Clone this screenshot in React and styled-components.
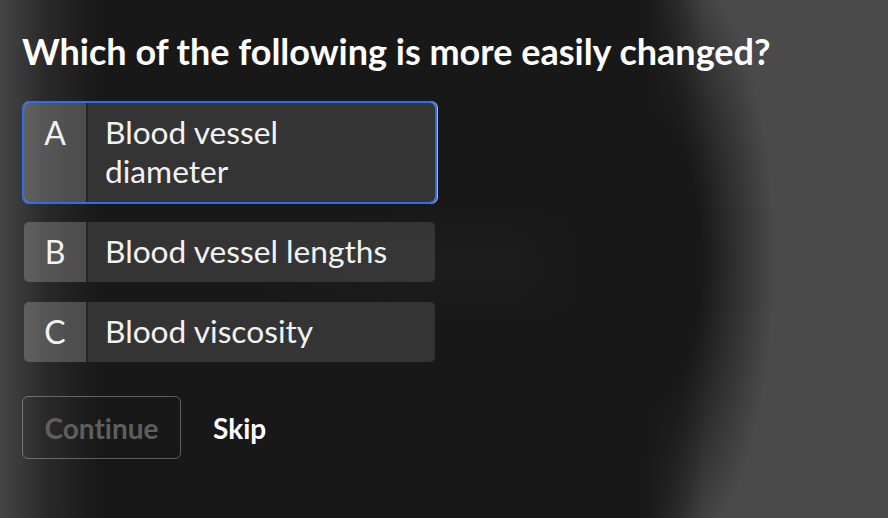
import React, { useState } from 'react'
import styled, { createGlobalStyle } from 'styled-components'

const GlobalStyle = createGlobalStyle`
  html, body {
    margin: 0;
    padding: 0;
    background: #181818;
  }
  body {
    font-family: Lato, "Noto Sans", sans-serif;
    font-variant-ligatures: none;
    -webkit-font-smoothing: antialiased;
  }
`

const OPTIONS = [
  { letter: 'A', text: 'Blood vessel diameter' },
  { letter: 'B', text: 'Blood vessel lengths' },
  { letter: 'C', text: 'Blood viscosity' },
]

const App = () => {
  const [selected, setSelected] = useState(0);

  return (
    <Page>
      <GlobalStyle />
      <Title>Which of the following is more easily changed?</Title>

      <OptionList>
        {OPTIONS.map((opt, idx) => (
          <Option
            key={opt.letter}
            $active={selected === idx}
            onClick={() => setSelected(idx)}
          >
            <Letter>{opt.letter}</Letter>
            <OptionText>{opt.text}</OptionText>
          </Option>
        ))}
      </OptionList>

      <Actions>
        <ContinueButton disabled>Continue</ContinueButton>
        <SkipButton>Skip</SkipButton>
      </Actions>
    </Page>
  )
}

const Page = styled.div`
  min-height: 100vh;
  box-sizing: border-box;
  padding: 31px 24px 0;
  background:
    radial-gradient(ellipse 135px 330px at 640px 260px, #181818 45%, rgba(24, 24, 24, 0) 100%),
    radial-gradient(ellipse 260px 60px at 470px 265px, rgba(255, 255, 255, 0.025) 0, rgba(255, 255, 255, 0) 100%),
    linear-gradient(to right, #454545 0, #2a2a2a 45px, #181818 100px, #181818 645px, #4a4a4a 705px);
`

const Title = styled.h1`
  margin: 0 0 0 -2px;
  font-size: 36px;
  line-height: 40px;
  font-weight: 700;
  color: #ffffff;
`

const OptionList = styled.div`
  display: flex;
  flex-direction: column;
  gap: 20px;
  width: 411px;
  margin-top: 32px;
`

const Option = styled.div`
  display: flex;
  align-items: stretch;
  border-radius: 5px;
  background: rgba(255, 255, 255, 0.12);
  color: #f2f2f2;
  cursor: pointer;
  box-shadow: ${p => p.$active
    ? '0 0 0 2px #2f6cf0, 1px 0 0 2px rgba(255, 255, 255, 0.7)'
    : 'none'};
`

const Letter = styled.div`
  flex: 0 0 62px;
  display: flex;
  justify-content: center;
  padding-top: 10px;
  font-size: 32px;
  line-height: 39px;
  background: rgba(255, 255, 255, 0.1);
  border-radius: 5px 0 0 5px;
  border-right: 2px solid #262626;
`

const OptionText = styled.div`
  flex: 1;
  padding: 10px 35px 11px 17px;
  font-size: 31.7px;
  line-height: 39px;
`

const Actions = styled.div`
  display: flex;
  align-items: center;
  gap: 32px;
  margin-top: 34px;
  margin-left: -2px;
`

const ContinueButton = styled.button`
  width: 159px;
  height: 63px;
  box-sizing: border-box;
  padding: 0;
  border: 1.5px solid rgba(255, 255, 255, 0.3);
  border-radius: 6px;
  background: transparent;
  color: #5e5e5e;
  font-family: Lato, sans-serif;
  font-variant-ligatures: none;
  font-size: 28px;
  font-weight: 700;
`

const SkipButton = styled.button`
  border: none;
  background: none;
  padding: 0;
  color: #ffffff;
  font-family: Lato, sans-serif;
  font-variant-ligatures: none;
  font-size: 28px;
  font-weight: 700;
  cursor: pointer;
`

export default App
